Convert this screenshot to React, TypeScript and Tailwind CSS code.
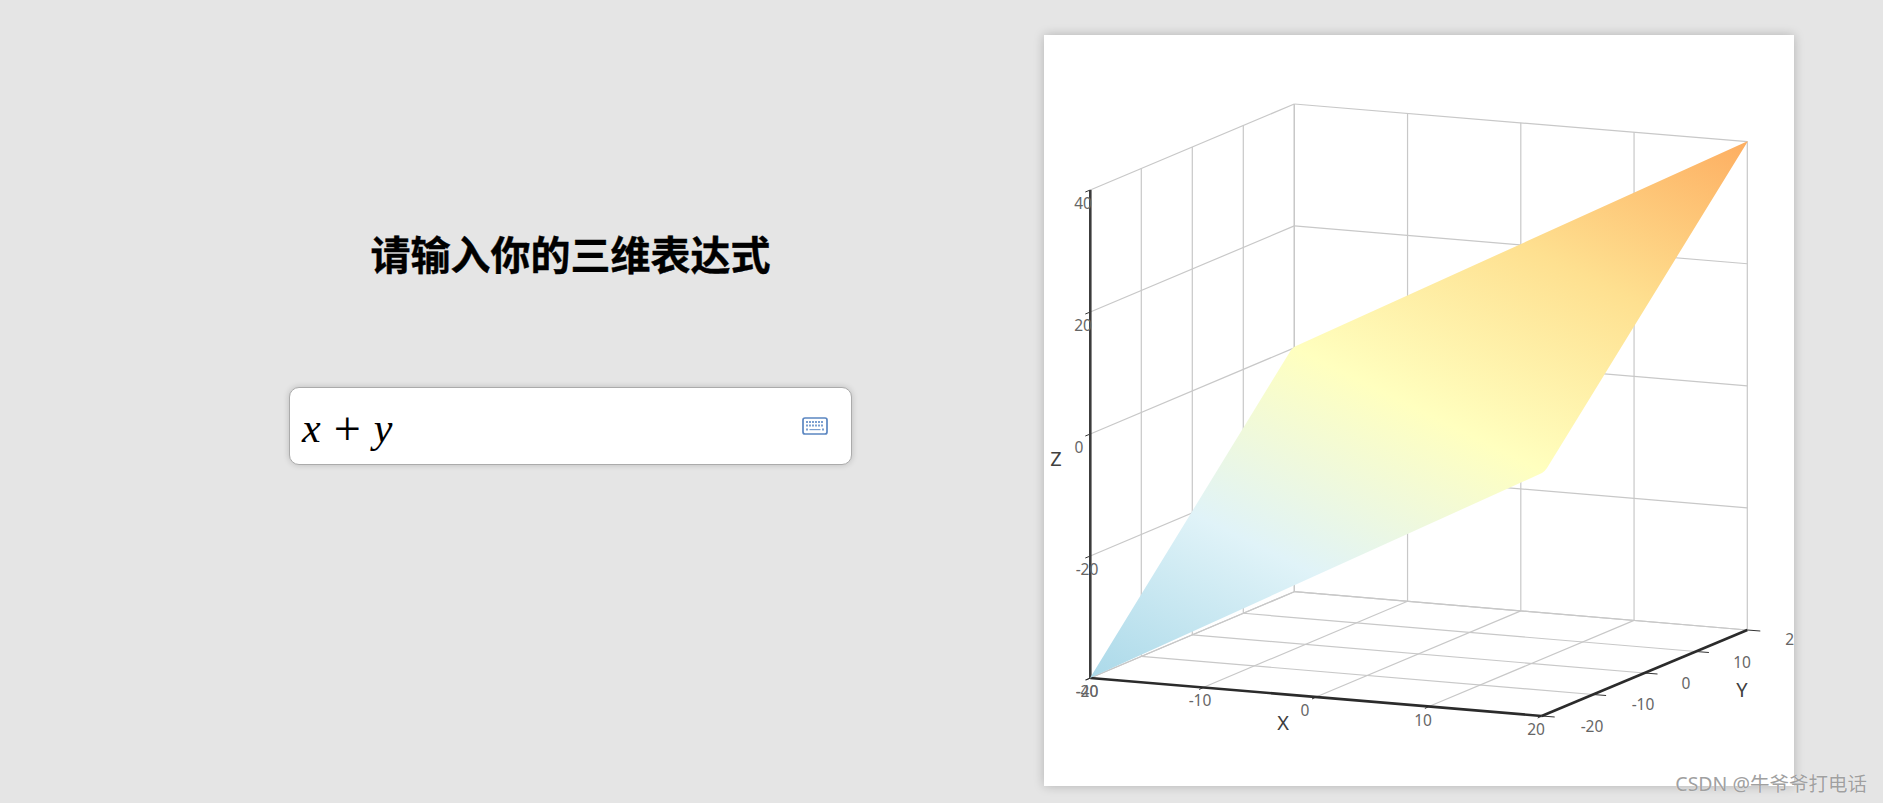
import React from 'react';

type Pt = [number, number];

const mix = (a: Pt, b: Pt, t: number): Pt => [a[0] + (b[0] - a[0]) * t, a[1] + (b[1] - a[1]) * t];

// cube corners, in page pixels
const floorA: Pt = [1090.3, 678];
const floorB: Pt = [1541.7, 716];
const floorC: Pt = [1747.3, 630];
const floorD: Pt = [1294.3, 591.7];
const topA: Pt = [1090.3, 190];
const topD: Pt = [1294.3, 104];
const topC: Pt = [1747.3, 141.7];

const steps = [0, 0.25, 0.5, 0.75, 1];

const tickLabels: { t: string; x: number; y: number }[] = [
  { t: '40', x: 1083, y: 203 },
  { t: '20', x: 1083, y: 325 },
  { t: '0', x: 1079, y: 447 },
  { t: '-20', x: 1087, y: 569 },
  { t: '-40', x: 1087, y: 691 },
  { t: '-20', x: 1087, y: 691 },
  { t: '-10', x: 1200, y: 700 },
  { t: '0', x: 1305, y: 710 },
  { t: '10', x: 1423, y: 720 },
  { t: '20', x: 1536, y: 729 },
  { t: '-20', x: 1592, y: 726 },
  { t: '-10', x: 1643, y: 704 },
  { t: '0', x: 1686, y: 683 },
  { t: '10', x: 1742, y: 662 },
  { t: '20', x: 1794, y: 639 },
];

const Line: React.FC<{ a: Pt; b: Pt; color?: string; width?: number }> = ({ a, b, color = '#c8c8c8', width = 1.2 }) => (
  <line x1={a[0]} y1={a[1]} x2={b[0]} y2={b[1]} stroke={color} strokeWidth={width} />
);

const SurfaceChart: React.FC = () => (
  <svg viewBox="1044 35 750 751" className="block w-full h-full">
    <defs>
      <linearGradient id="surface" gradientUnits="userSpaceOnUse" x1="1090" y1="678" x2="1433" y2="-14">
        <stop offset="0" stopColor="#abd9e9" />
        <stop offset="0.25" stopColor="#e0f3f8" />
        <stop offset="0.5" stopColor="#ffffbf" />
        <stop offset="0.75" stopColor="#fee090" />
        <stop offset="1" stopColor="#fdae61" />
      </linearGradient>
    </defs>

    {steps.map((s) => (
      <g key={s}>
        <Line a={mix(topA, floorA, s)} b={mix(topD, floorD, s)} />
        <Line a={mix(topD, floorD, s)} b={mix(topC, floorC, s)} />
        <Line a={mix(floorA, floorB, s)} b={mix(floorD, floorC, s)} />
        <Line a={mix(floorA, floorD, s)} b={mix(floorB, floorC, s)} />
        <Line a={mix(topA, topD, s)} b={mix(floorA, floorD, s)} />
        <Line a={mix(topD, topC, s)} b={mix(floorD, floorC, s)} />
      </g>
    ))}

    {/* ticks */}
    {steps.map((s) => {
      const z = mix(topA, floorA, s);
      const x = mix(floorA, floorB, s);
      const y = mix(floorB, floorC, s);
      return (
        <g key={s}>
          <Line a={z} b={[z[0] - 5, z[1] + 2]} color="#333" width={1} />
          <Line a={x} b={[x[0] - 4, x[1] + 2]} color="#333" width={1} />
          <Line a={y} b={[y[0] + 13, y[1] + 1]} color="#333" width={1} />
        </g>
      );
    })}

    <Line a={topA} b={floorA} color="#3c3c3c" width={2.6} />
    <Line a={floorA} b={floorB} color="#2b2b2b" width={2.6} />
    <Line a={floorB} b={floorC} color="#2b2b2b" width={2.6} />

    <path
      d="M1090 678 L1291 350 Q1293 347 1296 346 L1748 141 L1547 468 Q1545 471 1542 473 Z"
      fill="url(#surface)"
    />

    <g fontFamily="'Noto Sans', 'Open Sans', sans-serif" fontSize="15.5" fill="#666666" textAnchor="middle" dominantBaseline="central">
      {tickLabels.map((l) => (
        <text key={`${l.t}-${l.x}-${l.y}`} x={l.x} y={l.y}>
          {l.t}
        </text>
      ))}
    </g>
    <g fontFamily="'Noto Sans', 'Open Sans', sans-serif" fontSize="20" fill="#404040" textAnchor="middle" dominantBaseline="central">
      <text x="1056" y="458">Z</text>
      <text x="1283" y="722">X</text>
      <text x="1742" y="689">Y</text>
    </g>
  </svg>
);

const KeyboardIcon: React.FC = () => (
  <svg width="26" height="18" viewBox="0 0 26 18" fill="none">
    <rect x="1" y="1" width="24" height="16" rx="2" stroke="#5b86c1" strokeWidth="1.7" />
    {[5, 8.5].map((y) =>
      [5, 8, 11, 14, 17, 20].map((x) => (
        <rect key={`${x}-${y}`} x={x - 1} y={y - 1} width="2" height="2" fill="#7b9fd0" />
      ))
    )}
    <rect x="4" y="11.5" width="2" height="2" fill="#7b9fd0" />
    <rect x="7.5" y="12" width="11" height="1.2" fill="#7b9fd0" />
    <rect x="20" y="11.5" width="2" height="2" fill="#7b9fd0" />
  </svg>
);

const App: React.FC = () => (
  <div className="relative flex h-screen w-full overflow-hidden bg-[#e5e5e5] pl-[289px]">
    <div className="flex w-[563px] flex-col items-center pt-[223px]">
      <h1 className="text-[40px] leading-[60px] font-bold text-black [-webkit-text-stroke:0.4px_#000] font-['Noto_Sans_CJK_SC',sans-serif]">
        请输入你的三维表达式
      </h1>
      <div className="mt-[104px] flex h-[78px] w-full items-center justify-between rounded-[10px] border border-[#ababab] bg-white pl-[12px] pr-[23px] shadow-[0_0_6px_rgba(0,0,0,0.18)]">
        <div className="flex items-baseline leading-none text-black font-['Liberation_Serif',serif]">
          <span className="text-[42px] italic">x</span>
          <span className="mx-[13px] translate-y-[3px] text-[48px] leading-none">+</span>
          <span className="text-[42px] italic">y</span>
        </div>
        <KeyboardIcon />
      </div>
    </div>

    <div className="ml-[192px] mt-[35px] h-[751px] w-[750px] overflow-hidden bg-white shadow-[0_0_10px_rgba(0,0,0,0.22)]">
      <SurfaceChart />
    </div>

    <div className="absolute bottom-[7px] right-[16px] text-[19.5px] leading-6 text-[#a0a0a0] [text-shadow:0_0_1px_#ffffff] font-['Noto_Sans','Noto_Sans_CJK_SC',sans-serif]">
      CSDN @牛爷爷打电话
    </div>
  </div>
);

export default App;
